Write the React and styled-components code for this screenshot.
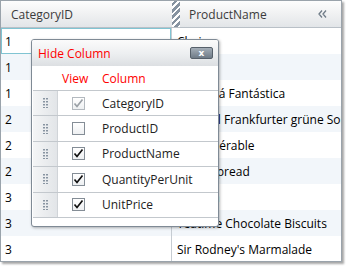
import styled, { createGlobalStyle } from 'styled-components'

const GlobalStyle = createGlobalStyle`
  html, body {
    margin: 0;
    padding: 0;
    background: #fff;
    font-family: "Open Sans", "Noto Sans", sans-serif;
    font-size: 12px;
  }
`

const Page = styled.div`
  position: relative;
  width: 348px;
  height: 269px;
  overflow: hidden;
`

const Grid = styled.div`
  width: 342px;
  height: 262px;
  box-sizing: border-box;
  border: 1px solid #9aa3ab;
  box-shadow: 2px 2px 2px rgba(0, 0, 0, 0.35);
  display: flex;
  flex-direction: column;
  overflow: hidden;
`

const HeaderRow = styled.div`
  display: flex;
  height: 26px;
  flex-shrink: 0;
  border-bottom: 1px solid #b9c0c7;
  background: linear-gradient(#fdfdfd, #f0f1f2 50%, #e2e5e8);
`

const HeaderCell = styled.div`
  display: flex;
  align-items: center;
  justify-content: space-between;
  box-sizing: border-box;
  padding: 0 10px 0 ${p => p.$pad || 10}px;
  color: #3b3b3b;
  font-size: 12px;
  width: ${p => (p.$w ? `${p.$w}px` : 'auto')};
  flex: ${p => (p.$w ? 'none' : '1')};
`

const Hatch = styled.div`
  width: 8px;
  flex: none;
  background: repeating-linear-gradient(
    -45deg,
    #ffffff 0 2px,
    #8693a1 2px 4.5px
  );
`

const Chevrons = styled.svg`
  width: 9px;
  height: 8px;
  margin-right: 4px;
`

const Body = styled.div`
  flex: 1;
  display: grid;
  grid-template-columns: 171px 1fr;
  grid-auto-rows: 26px;
`

const Cell = styled.div`
  display: flex;
  align-items: center;
  padding-left: ${p => (p.$first ? 4 : 5)}px;
  color: #000;
  white-space: nowrap;
  overflow: hidden;
  background: ${p => (p.$alt ? '#f2f6fa' : '#fff')};
  border-right: ${p => (p.$first ? '1px solid #c6ccd2' : 'none')};
  box-sizing: border-box;
  box-shadow: ${p => (p.$current ? 'inset 0 0 0 1px #80c4d2' : 'none')};
`

const Window = styled.div`
  position: absolute;
  left: 31px;
  top: 39px;
  width: 188px;
  height: 188px;
  box-sizing: border-box;
  border: 1px solid #7f8a95;
  border-radius: 3px;
  background: #fff;
  box-shadow: 1px 1px 3px rgba(0, 0, 0, 0.3);
  display: flex;
  flex-direction: column;
  overflow: hidden;
`

const TitleBar = styled.div`
  height: 26px;
  flex: none;
  display: flex;
  align-items: center;
  justify-content: space-between;
  padding: 0 5px 0 6px;
  background: linear-gradient(#fbfbfb, #eceef0 55%, #dcdfe2);
  color: #ff0000;
  font-size: 12px;
`

const CloseButton = styled.div`
  width: 21px;
  height: 10px;
  border: 1px solid #56606a;
  border-radius: 2px;
  background: linear-gradient(#a4aeb8, #6f7b87);
  display: flex;
  align-items: center;
  justify-content: center;
  color: #fff;
  font-family: "DejaVu Sans", sans-serif;
  font-weight: bold;
  font-size: 9px;
  line-height: 1;
`

const ListHeader = styled.div`
  height: 24px;
  flex: none;
  display: grid;
  grid-template-columns: 29px 40px 1fr;
  align-items: center;
  color: #ff0000;
  font-size: 12px;
  border-bottom: 1px solid #c3c8cd;
  margin-left: 1px;
`

const List = styled.div`
  display: flex;
  flex-direction: column;
  margin-left: 1px;
`

const ListRow = styled.div`
  height: 25.4px;
  box-sizing: border-box;
  display: grid;
  grid-template-columns: 25px 44px 1fr;
  align-items: center;
  border-bottom: 1px solid #c3c8cd;
  color: #222;
  font-size: 12px;
`

const Grip = styled.div`
  height: 100%;
  display: flex;
  align-items: center;
  justify-content: center;
  background: linear-gradient(90deg, #f4f5f6, #e2e5e8);
  border-right: 1px solid #d0d4d8;
`

const Dots = styled.svg`
  width: 5px;
  height: 10px;
`

const Box = styled.div`
  width: 11px;
  height: 11px;
  margin-left: 14px;
  border: 1px solid ${p => (p.$disabled ? '#b3b9bf' : '#848d96')};
  background: linear-gradient(#ffffff, #eef0f2);
  display: flex;
  align-items: center;
  justify-content: center;
`

function GripDots() {
  const dots = []
  for (let r = 0; r < 4; r++) {
    for (let c = 0; c < 2; c++) {
      dots.push(<rect key={`${r}-${c}`} x={c * 3} y={r * 3} width="2" height="1.5" fill="#8894a1" />)
    }
  }
  return <Dots viewBox="0 0 5 10">{dots}</Dots>
}

function Check({ checked, disabled }) {
  return (
    <Box $disabled={disabled}>
      {checked && (
        <svg width="11" height="11" viewBox="0 0 11 11">
          <path
            d="M1.5 5.5 L4 8.5 L9.5 1.5"
            fill="none"
            stroke={disabled ? '#9aa0a6' : '#111'}
            strokeWidth="1.7"
          />
        </svg>
      )}
    </Box>
  )
}

const rows = [
  ['1', 'Chai'],
  ['1', 'Chang'],
  ['1', 'Guaraná Fantástica'],
  ['2', 'Original Frankfurter grüne Soße'],
  ['2', "Sirop d'érable"],
  ['2', 'Vegie-spread'],
  ['3', 'Pavlova'],
  ['3', 'Teatime Chocolate Biscuits'],
  ['3', "Sir Rodney's Marmalade"],
]

const columns = [
  { name: 'CategoryID', checked: true, disabled: true },
  { name: 'ProductID', checked: false },
  { name: 'ProductName', checked: true },
  { name: 'QuantityPerUnit', checked: true },
  { name: 'UnitPrice', checked: true },
]

export default function App() {
  return (
    <>
      <GlobalStyle />
      <Page>
        <Grid>
          <HeaderRow>
            <HeaderCell $w={171}>CategoryID</HeaderCell>
            <Hatch />
            <HeaderCell $pad={9}>
              ProductName
              <Chevrons viewBox="0 0 9 8">
                <path d="M4 0.5 L1 4 L4 7.5 M8 0.5 L5 4 L8 7.5" fill="none" stroke="#6f7b87" strokeWidth="1.3" />
              </Chevrons>
            </HeaderCell>
          </HeaderRow>
          <Body>
            {rows.map(([cat, name], i) => [
              <Cell key={`c${i}`} $first $alt={i % 2 === 1} $current={i === 0}>{cat}</Cell>,
              <Cell key={`n${i}`} $alt={i % 2 === 1}>{name}</Cell>,
            ])}
          </Body>
        </Grid>

        <Window>
          <TitleBar>
            Hide Column
            <CloseButton>x</CloseButton>
          </TitleBar>
          <ListHeader>
            <span />
            <span>View</span>
            <span>Column</span>
          </ListHeader>
          <List>
            {columns.map(col => (
              <ListRow key={col.name}>
                <Grip><GripDots /></Grip>
                <Check checked={col.checked} disabled={col.disabled} />
                <span>{col.name}</span>
              </ListRow>
            ))}
          </List>
        </Window>
      </Page>
    </>
  )
}
